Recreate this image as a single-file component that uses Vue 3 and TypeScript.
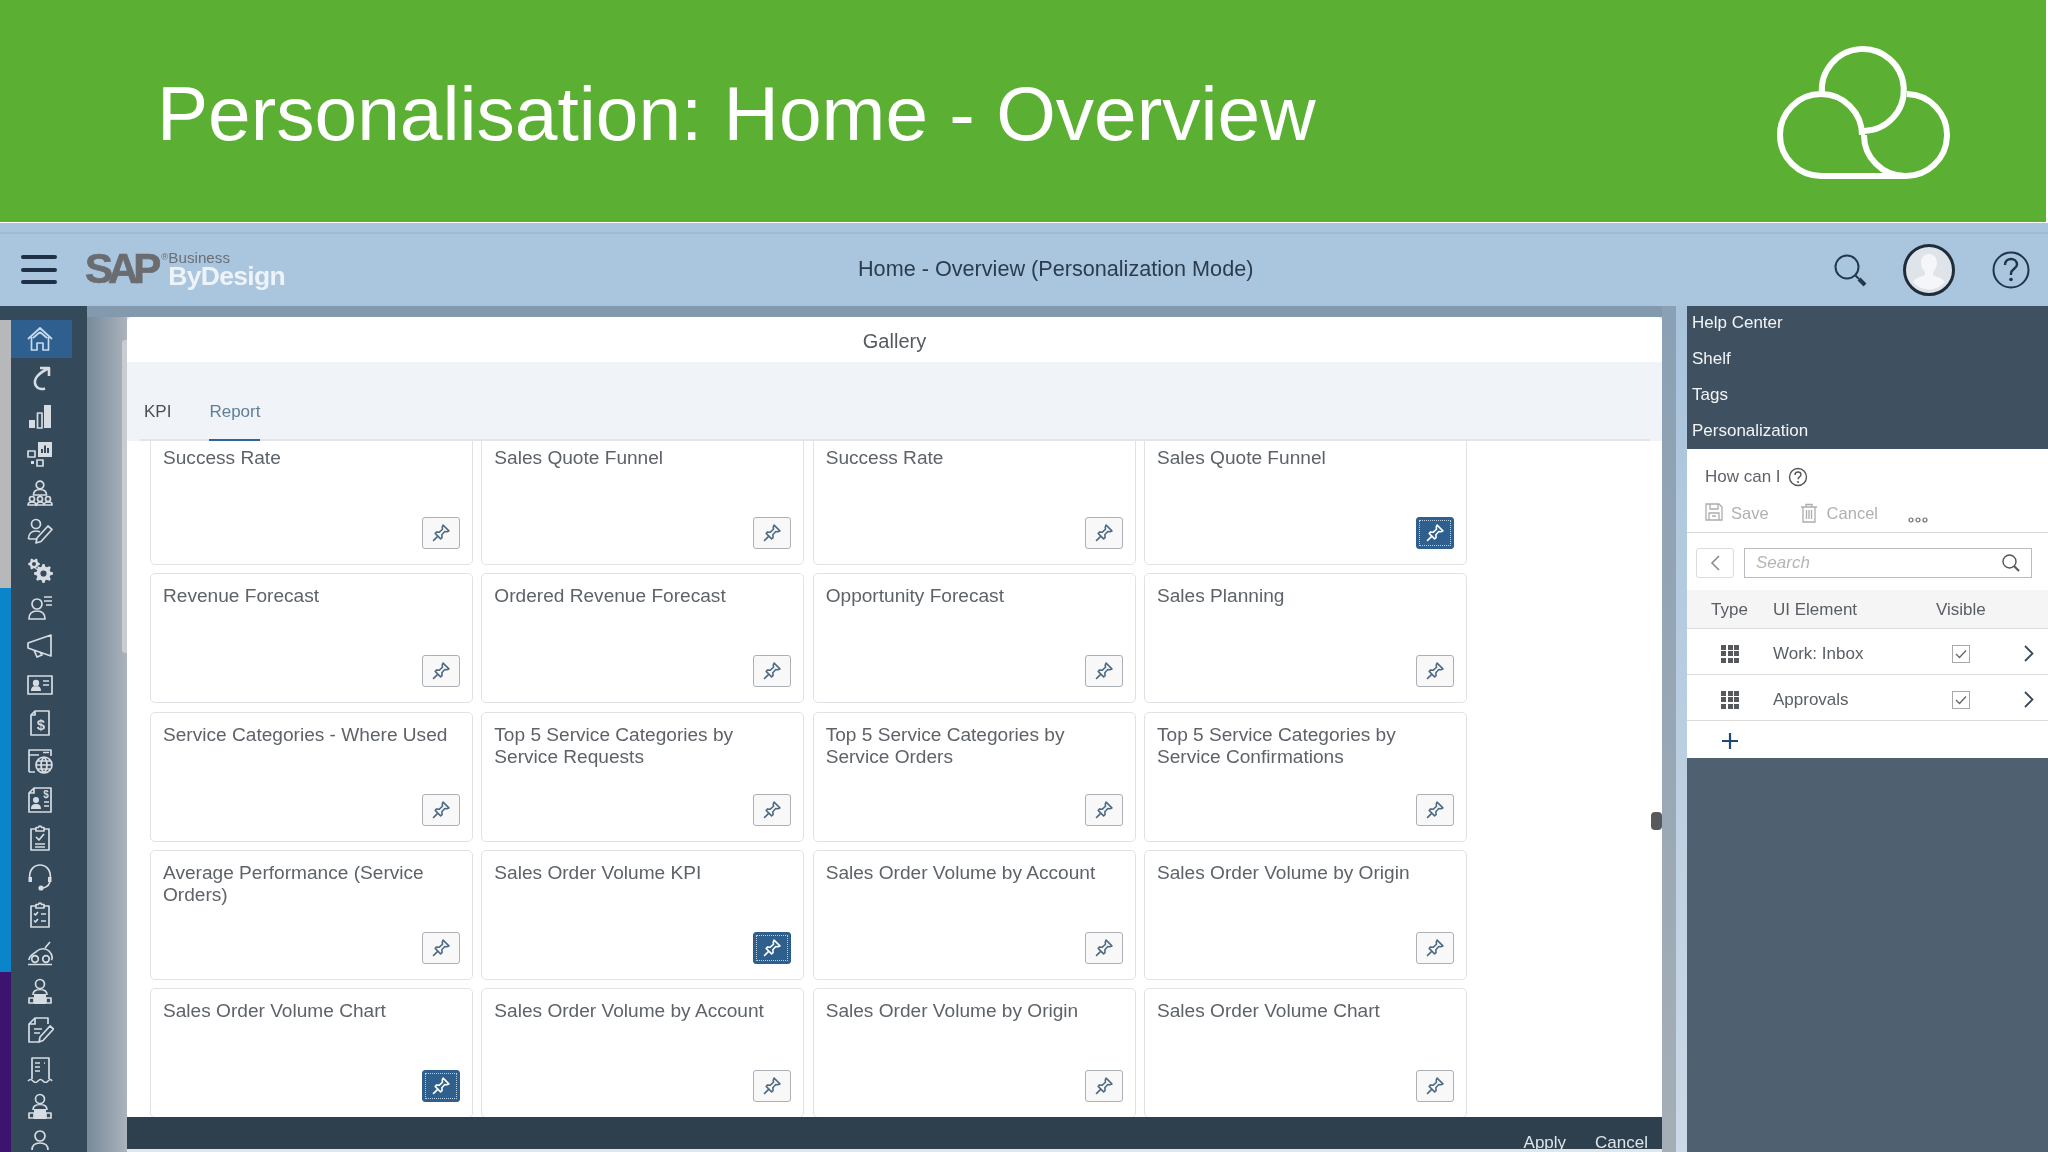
<script setup lang="ts">
interface Icon { d?: string; f?: string; k?: string; t?: string; tx?: number; ty?: number; ts?: number }

const c = (x: number, y: number, r: number) => `M${x - r} ${y}a${r} ${r} 0 1 0 ${2 * r} 0a${r} ${r} 0 1 0 ${-2 * r} 0z`
const r = (x: number, y: number, w: number, h: number) => `M${x} ${y}h${w}v${h}h${-w}z`
const gear = (cx: number, cy: number, a: number, b: number, n: number) => {
  let p = ''
  for (let i = 0; i < n * 4; i++) {
    const ang = ((i - 0.5) * Math.PI * 2) / (n * 4)
    const rad = i % 4 < 2 ? b : a + (b - a) * 0.45
    p += `${i ? 'L' : 'M'}${(cx + rad * Math.cos(ang)).toFixed(1)} ${(cy + rad * Math.sin(ang)).toFixed(1)}`
  }
  return p + 'z' + c(cx, cy, a * 0.62)
}

const icons: Icon[] = [
  { d: 'M2 14 14 3 26 14M5.500 10.500V25H11V18H17V25H22.500V10.500M14 7 7 13M14 7l7 6' },
  { d: 'M14 4H23V12M23 4C13 9 6 15 10 22 12 25 16 25.500 19 24.500' },
  { f: r(3, 18, 6, 8) + r(18, 3, 7, 23), d: r(11.500, 11, 4.500, 15) },
  { f: r(12, 2, 14, 15) + r(5, 21, 3, 3), k: 'M16 13V9M19 13V5.500M22 13V8', d: r(2, 11, 7, 6) + r(11, 20, 6, 6) },
  { d: c(14, 6, 3.800) + 'M7.500 16c0-4 3-5.500 6.500-5.500s6.500 1.500 6.500 5.500z' + c(6, 20, 2.500) + c(14, 20, 2.500) + c(22, 20, 2.500) + 'M2 26c0-2 2-3 4-3s4 1 4 3 0-3 4-3 4 3 4 3 0-3 4-3 4 1 4 3z' },
  { d: c(10, 7, 4.500) + 'M2.500 22c0-5 3-8 7.500-8 2 0 3 .5 4 1M2.500 22H11M10 26 11 21 22 9 26 12.500 15 24.500z' },
  { f: gear(8, 8, 3.200, 5.800, 6) + gear(17.500, 17.500, 5, 9.500, 8) },
  { d: c(11, 10, 5) + 'M3 25c0-5.500 3-8 8-8s8 2.500 8 8zM18 3h8M18 7h8M20 11h6' },
  { d: 'M2 11 25 3V24L9 18.500 2 16zM8 18l3 7 5-2-2-3M25 3v21' },
  { d: r(2, 5, 24, 18) + 'M17 10h6M17 14h6', f: c(10, 12, 3.200) + 'M5 20c0-4 2-5 5-5s5 1 5 5z' },
  { d: 'M9 2H23V26H5V6zM9 2V6H5', t: '$', tx: 15, ty: 21, ts: 15 },
  { d: 'M3 25V3H25V9M3 8H13M17 5.500h6M3 25H9' + c(18, 18, 8) + 'M10 18h16M18 10c-4 4-4 12 0 16M18 10c4 4 4 12 0 16M11 14h14M11 22h14' },
  { d: 'M8 2H25V26H3V7zM8 2V7H3M18 16h5M18 20h5', f: c(10, 14, 3) + 'M5 23c0-4 2-5 5-5s5 1 5 5z', t: '$', tx: 20, ty: 12, ts: 10 },
  { d: 'M10 5H5V26H23V5H18M10 7V3.500h2.500a1.500 1.500 0 0 1 3 0H18V7zM10 13l3 3 5-6M9 20h10M9 23h10' },
  { d: 'M4 17C2 6 9 2 14 2s12 4 10 15M24 17c0 4-3 7-7 8', f: c(15, 25, 2.600) + r(2.500, 14, 3.500, 5) + r(22, 14, 3.500, 5) },
  { d: 'M10 5H5V26H23V5H18M10 7V3.500h2.500a1.500 1.500 0 0 1 3 0H18V7zM8 12.500l1.500 1.500 2.500-3M15 13h5M8 19.500l1.500 1.500 2.500-3M15 20h5' },
  { d: 'M2 25.500H26M3 21C3 16 8 15 11 12 14 9 20 9 23 12 26 15 27 18 25.500 21M19 9l5-6' + c(9, 20, 3.300) + c(20, 20, 3.300) },
  { d: c(14, 6, 4.500) + 'M7 17c0-4 3-5.500 7-5.500s7 1.500 7 5.500M3 20H8V25H3zM20 20H25V25H20z', f: r(8, 16, 12, 10) },
  { d: 'M22 8V2H9L3 8V26H14M9 2V8H3M8 13h8M8 17h6M13 26 14 21 24 10 27.500 13 17 24.500z' },
  { d: 'M6 24V3H23V24M2 26c2-2 3-2 5 0s3 2 5 0 3-2 5 0 3 2 5 0 3-2 4 0M9 8h5M9 12h5M9 16h5M18 8h1' },
  { d: c(14, 6, 4.500) + 'M7 17c0-4 3-5.500 7-5.500s7 1.500 7 5.500M3 20H8V25H3zM20 20H25V25H20z', f: r(8, 16, 12, 10) },
  { d: c(14, 8, 5) + 'M6 22c0-5 3-7 8-7s8 2 8 7M5 26H23' },
]

interface Card { title: string; on?: boolean }
const cards: Card[] = [
  { title: 'Success Rate' }, { title: 'Sales Quote Funnel' }, { title: 'Success Rate' }, { title: 'Sales Quote Funnel', on: true },
  { title: 'Revenue Forecast' }, { title: 'Ordered Revenue Forecast' }, { title: 'Opportunity Forecast' }, { title: 'Sales Planning' },
  { title: 'Service Categories - Where Used' }, { title: 'Top 5 Service Categories by Service Requests' }, { title: 'Top 5 Service Categories by Service Orders' }, { title: 'Top 5 Service Categories by Service Confirmations' },
  { title: 'Average Performance (Service Orders)' }, { title: 'Sales Order Volume KPI', on: true }, { title: 'Sales Order Volume by Account' }, { title: 'Sales Order Volume by Origin' },
  { title: 'Sales Order Volume Chart', on: true }, { title: 'Sales Order Volume by Account' }, { title: 'Sales Order Volume by Origin' }, { title: 'Sales Order Volume Chart' },
]
const links = ['Help Center', 'Shelf', 'Tags', 'Personalization']
const rows = ['Work: Inbox', 'Approvals']
const gridCells = [0, 1, 2, 3, 4, 5, 6, 7, 8]
</script>

<template>
  <div class="app">
    <section class="banner">
      <h1 class="banner-title">Personalisation: Home - Overview</h1>
      <svg class="cloud" width="180" height="150" viewBox="0 0 180 150" fill="none" stroke="#fff" stroke-width="6">
        <path d="M51 136A41 41 0 1 1 92 95" />
        <path d="M94 95A41 41 0 0 0 135 136A41 41 0 0 0 137 54" />
        <path d="M52 54A41 41 0 1 1 94 91" />
        <path d="M51 136H135" />
      </svg>
    </section>

    <header class="topbar">
      <div class="burger"><i></i><i></i><i></i></div>
      <div class="logo">
        <span class="logo-sap">SAP</span>
        <span class="logo-reg">®</span>
        <span class="logo-words">
          <span class="logo-biz">Business</span>
          <span class="logo-bd">ByDesign</span>
        </span>
      </div>
      <div class="top-title">Home - Overview (Personalization Mode)</div>
      <svg class="top-search" width="36" height="36" viewBox="0 0 36 36" fill="none" stroke="#22384d">
        <circle cx="14" cy="14" r="11.500" stroke-width="2" />
        <path d="M22.500 22.500 26 26" stroke-width="2" />
        <path d="M26 26 32 32" stroke-width="4" />
      </svg>
      <svg class="top-avatar" width="54" height="54" viewBox="0 0 54 54">
        <circle cx="27" cy="27" r="24.500" fill="#dfe3ea" stroke="#1f2d3a" stroke-width="3" />
        <path d="M27 11c5 0 8 4 8 9 0 4-2 7-4 9v3c4 2 10 3 12 7a21 21 0 0 1-32 0c2-4 8-5 12-7v-3c-2-2-4-5-4-9 0-5 3-9 8-9z" fill="#f4f6f9" />
      </svg>
      <svg class="top-help" width="38" height="38" viewBox="0 0 38 38" fill="none" stroke="#1f3349" stroke-width="2">
        <circle cx="19" cy="19" r="17.500" />
        <path d="M13 14c0-4 3-6 6-6s6 2 6 5.500c0 4-6 4.500-6 9v1.500" stroke-width="2.400" />
        <circle cx="19" cy="28.500" r="1.800" fill="#1f3349" stroke="none" />
      </svg>
    </header>

    <div class="main">
      <aside class="sidebar">
        <div class="strip">
          <div class="strip-gray"></div>
          <div class="strip-blue"></div>
          <div class="strip-purple"></div>
        </div>
        <nav class="nav">
          <div v-for="(ic, i) in icons" :key="i" class="nav-item" :class="{ active: i === 0 }">
            <svg width="28" height="28" viewBox="0 0 28 28" fill="none" :stroke="i === 0 ? '#c6dbee' : '#d6dce1'" :stroke-width="i === 1 ? 2.600 : 1.700" stroke-linejoin="round">
              <path v-if="ic.f" :d="ic.f" fill="#d6dce1" fill-rule="evenodd" stroke="none" />
              <path v-if="ic.d" :d="ic.d" />
              <path v-if="ic.k" :d="ic.k" stroke="#34495a" stroke-width="2" />
              <text v-if="ic.t" :x="ic.tx" :y="ic.ty" :font-size="ic.ts" text-anchor="middle" font-weight="700" font-family="Liberation Sans, sans-serif" fill="#d6dce1" stroke="none">{{ ic.t }}</text>
            </svg>
          </div>
        </nav>
      </aside>

      <div class="stage">
        <div class="behind"></div>
        <div class="dialog">
          <div class="dialog-head">Gallery</div>
          <div class="tabs">
            <span class="tab">KPI</span>
            <span class="tab tab-on">Report</span>
          </div>
          <div class="scroller">
            <div class="cards">
              <div v-for="(card, i) in cards" :key="i" class="card">
                <div class="card-title">{{ card.title }}</div>
                <button class="pin" :class="{ 'pin-on': card.on }">
                  <svg width="20" height="20" viewBox="0 0 24 24" fill="none" :stroke="card.on ? '#fff' : '#4d6a85'" stroke-width="1.900" stroke-linejoin="round">
                    <path d="M14.500 2.500 21.500 9.500 19 10.500 16.500 10.200 13 14 13.300 17.500 11.500 19 5 12.500 6.500 10.700 10 11 13.800 7.500 13.500 5z" />
                    <path d="M8 16 2.500 21.500" />
                  </svg>
                </button>
              </div>
            </div>
            <div class="thumb"></div>
          </div>
          <div class="dialog-foot">
            <span>Apply</span>
            <span>Cancel</span>
          </div>
        </div>
      </div>

      <aside class="panel">
        <div class="panel-links">
          <div v-for="l in links" :key="l" class="panel-link">{{ l }}</div>
        </div>
        <div class="panel-body">
          <div class="how">
            <span>How can I</span>
            <svg width="20" height="20" viewBox="0 0 20 20" fill="none" stroke="#555" stroke-width="1.400">
              <circle cx="10" cy="10" r="8.500" />
              <path d="M7 8c0-2 1.500-3 3-3s3 1 3 2.700c0 2-3 2.300-3 4.500" />
              <circle cx="10" cy="15" r="1" fill="#555" stroke="none" />
            </svg>
          </div>
          <div class="toolbar">
            <svg width="18" height="18" viewBox="0 0 18 18" fill="none" stroke="#adadad" stroke-width="1.300">
              <path d="M1 1H14L17 4V17H1zM5 1V6H13V1M4 17V10H14V17M7 13h4" />
            </svg>
            <span class="tool-text save">Save</span>
            <svg width="18" height="20" viewBox="0 0 18 20" fill="none" stroke="#adadad" stroke-width="1.300">
              <path d="M1 4H17M6 4V1.500H12V4M3 4V19H15V4M6.500 7V16M9 7V16M11.500 7V16" />
            </svg>
            <span class="tool-text">Cancel</span>
            <svg class="dots" width="20" height="6" viewBox="0 0 20 6" fill="none" stroke="#6d6d6d" stroke-width="1.200">
              <circle cx="3" cy="3" r="2" /><circle cx="10" cy="3" r="2" /><circle cx="17" cy="3" r="2" />
            </svg>
          </div>
          <div class="searchrow">
            <div class="back">
              <svg width="12" height="18" viewBox="0 0 12 18" fill="none" stroke="#8b8b8b" stroke-width="1.600"><path d="M10 2 3 9l7 7" /></svg>
            </div>
            <div class="searchbox">
              <span>Search</span>
              <svg width="20" height="20" viewBox="0 0 20 20" fill="none" stroke="#555" stroke-width="1.400">
                <circle cx="8.500" cy="8.500" r="6.500" />
                <path d="M13 13 18 18" stroke-width="2" />
              </svg>
            </div>
          </div>
          <div class="thead">
            <span class="col-type">Type</span>
            <span class="col-name">UI Element</span>
            <span class="col-vis">Visible</span>
          </div>
          <div v-for="row in rows" :key="row" class="trow">
            <div class="gridicon"><i v-for="n in gridCells" :key="n"></i></div>
            <span class="row-name">{{ row }}</span>
            <span class="check">
              <svg width="14" height="12" viewBox="0 0 14 12" fill="none" stroke="#666" stroke-width="1.300"><path d="M2 6l3.500 3.500L12 2.500" /></svg>
            </span>
            <svg class="chev" width="10" height="17" viewBox="0 0 10 17" fill="none" stroke="#3a4a5a" stroke-width="1.800"><path d="M1 1l7.500 7.500L1 16" /></svg>
          </div>
          <div class="addrow">
            <svg width="18" height="18" viewBox="0 0 18 18" stroke="#1f4b73" stroke-width="2.200"><path d="M9 1V17M1 9H17" /></svg>
          </div>
        </div>
        <div class="panel-rest"></div>
      </aside>
    </div>
  </div>
</template>

<style scoped>
.app {
  width: 2048px;
  height: 1152px;
  overflow: hidden;
  background: #fff;
  font-family: "Liberation Sans", Arial, sans-serif;
  filter: blur(0.35px);
}
.banner {
  width: 2046px;
  height: 222px;
  background: #5bb033;
  display: flex;
  align-items: center;
  justify-content: space-between;
  padding: 0 96px 0 157px;
  box-sizing: border-box;
  margin-bottom: 1px;
}
.banner-title {
  margin: 0;
  color: #fff;
  font-weight: 400;
  font-size: 76.650px;
  line-height: 1;
  position: relative;
  top: 3px;
}
.cloud { margin-top: 8px; }

.topbar {
  height: 83px;
  box-sizing: border-box;
  display: flex;
  align-items: center;
  background: linear-gradient(#a9c5de 9px, #a3b9cf 9px, #a3b9cf 11px, #aac6df 11px);
  padding-top: 10px;
  position: relative;
}
.burger {
  width: 36px;
  margin-left: 21px;
  display: flex;
  flex-direction: column;
  gap: 8.500px;
}
.burger i {
  display: block;
  height: 4px;
  border-radius: 2px;
  background: #1d3046;
}
.logo {
  display: flex;
  align-items: flex-start;
  margin-left: 28px;
  height: 44px;
}
.logo-sap {
  font-weight: 700;
  font-size: 42px;
  line-height: 40px;
  letter-spacing: -5px;
  color: #6a6c70;
  margin-top: 1px;
  -webkit-text-stroke: 0.7px #6a6c70;
}
.logo-reg { font-size: 9.500px; line-height: 12px; color: #6a6c70; margin: 3px 0 0 5px; }
.logo-words { display: flex; flex-direction: column; margin: 2px 0 0 0; }
.logo-biz { font-size: 15.200px; line-height: 15px; color: #6a6f76; }
.logo-bd { font-size: 26.500px; line-height: 22px; font-weight: 700; color: #edf3f9; letter-spacing: -0.700px; }
.top-title {
  position: absolute;
  left: 858px;
  top: 33px;
  font-size: 21.640px;
  line-height: 26px;
  color: #2b3c4e;
  white-space: nowrap;
}
.top-search { margin-left: auto; margin-right: 33px; margin-top: 2px; }
.top-avatar { margin-right: 36px; }
.top-help { margin-right: 18px; }

.main { display: flex; height: 846px; }

.sidebar {
  width: 87px;
  flex: none;
  display: flex;
  background: #34495a;
  overflow: hidden;
}
.strip { width: 11px; padding-top: 14px; box-sizing: border-box; display: flex; flex-direction: column; }
.strip-gray { height: 268px; background: #b7b8b9; }
.strip-blue { height: 384px; background: #0a85c9; }
.strip-purple { flex: 1; background: #3c1470; }
.nav { padding-top: 14px; }
.nav-item {
  width: 61px;
  height: 38.400px;
  display: flex;
  align-items: center;
  justify-content: center;
  padding-right: 3px;
  box-sizing: border-box;
}
.nav-item:last-child { margin-top: -3px; }
.nav-item.active { background: #2f5f8e; }

.stage {
  flex: 1;
  min-width: 0;
  padding: 11px 25px 3px 40px;
  box-sizing: border-box;
  position: relative;
  background:
    linear-gradient(#a9c3db, #ccd9e6) right top / 11px 100% no-repeat,
    linear-gradient(#8aa0b4, #a5aeb6) right 11px top / 14px 100% no-repeat,
    linear-gradient(#8299ae 11px, transparent 11px) left top / 100% 100% no-repeat,
    linear-gradient(90deg, #78899a, #abb3bc) left top / 40px 100% no-repeat,
    #dfe6ec;
}
.behind {
  position: absolute;
  left: 35px;
  top: 34px;
  width: 5px;
  height: 313px;
  background: #c9ccd0;
  border-radius: 3px 0 0 3px;
}
.dialog {
  position: relative;
  height: 100%;
  display: flex;
  flex-direction: column;
  background: #fff;
  border-radius: 5px 5px 0 0;
  overflow: hidden;
}
.dialog-head {
  height: 45px;
  flex: none;
  display: flex;
  align-items: center;
  justify-content: center;
  padding-top: 3px;
  box-sizing: border-box;
  font-size: 20px;
  color: #555b61;
}
.tabs {
  height: 79px;
  flex: none;
  box-sizing: border-box;
  display: flex;
  align-items: flex-end;
  gap: 38px;
  padding-left: 17px;
  background:
    linear-gradient(#dfe5ea, #dfe5ea) 13px bottom / 1510px 2px no-repeat,
    #f0f4f8;
  position: relative;
  z-index: 1;
}
.tab {
  font-size: 17px;
  line-height: 22px;
  color: #4a4f55;
  padding-bottom: 16px;
  border-bottom: 2px solid transparent;
}
.tab-on { color: #5f7f98; border-bottom-color: #2f6497; }
.scroller { flex: 1; min-height: 0; overflow: hidden; position: relative; }
.cards {
  display: grid;
  grid-template-columns: repeat(4, 323px);
  grid-auto-rows: 130px;
  column-gap: 8.330px;
  row-gap: 8.250px;
  padding-left: 23px;
  margin-top: -6px;
}
.card {
  box-sizing: border-box;
  border: 1.500px solid #dfe2e6;
  border-radius: 5px;
  padding: 11px 12px 15px 12px;
  display: flex;
  flex-direction: column;
  justify-content: space-between;
  background: #fff;
}
.card-title {
  font-size: 19.100px;
  line-height: 22px;
  color: #5e6369;
}
.pin {
  align-self: flex-end;
  width: 38px;
  height: 32px;
  padding: 0;
  display: flex;
  align-items: center;
  justify-content: center;
  background: #f8f8f8;
  border: 1.500px solid #aab0b6;
  border-radius: 3px;
}
.pin-on {
  background: #2f5f8c;
  border-color: #2f5f8c;
  outline: 1px dotted #b9cfe3;
  outline-offset: -4px;
}
.thumb {
  position: absolute;
  right: 0;
  top: 371px;
  width: 11px;
  height: 18px;
  border-radius: 4px;
  background: #58595b;
}
.dialog-foot {
  height: 32px;
  flex: none;
  background: #2e3f4e;
  display: flex;
  justify-content: flex-end;
  gap: 29px;
  padding: 15px 14px 0 0;
  box-sizing: border-box;
  color: #dfe5ea;
  font-size: 17px;
  line-height: 22px;
  overflow: hidden;
}

.panel {
  width: 361px;
  flex: none;
  display: flex;
  flex-direction: column;
}
.panel-links {
  height: 143px;
  background: #3f5161;
  padding: 0 0 0 5px;
  box-sizing: border-box;
}
.panel-link {
  height: 36px;
  line-height: 33px;
  font-size: 17px;
  color: #f2f4f6;
}
.panel-body { height: 309px; background: #fff; flex: none; }
.panel-rest { flex: 1; background: #4f6070; }
.how {
  height: 52px;
  display: flex;
  align-items: center;
  gap: 7px;
  padding-left: 18px;
  padding-top: 4px;
  box-sizing: border-box;
  font-size: 17px;
  color: #5e6369;
}
.toolbar {
  height: 32px;
  display: flex;
  align-items: flex-start;
  padding-left: 18px;
  padding-top: 2px;
  box-sizing: border-box;
  border-bottom: 1.500px solid #d6d8da;
}
.tool-text { font-size: 16.500px; line-height: 20px; color: #b0b0b0; margin-left: 9px; }
.tool-text.save { margin-right: 31px; margin-left: 8px; }
.dots { margin: 14px 0 0 30px; }
.searchrow {
  height: 57px;
  display: flex;
  align-items: center;
  padding: 3px 16px 0 9px;
  gap: 10px;
  box-sizing: border-box;
}
.back {
  width: 38px;
  height: 30px;
  flex: none;
  box-sizing: border-box;
  border: 1.500px solid #dcdcdc;
  border-radius: 3px;
  display: flex;
  align-items: center;
  justify-content: center;
}
.searchbox {
  flex: 1;
  height: 30px;
  box-sizing: border-box;
  border: 1.500px solid #b9bdc1;
  display: flex;
  align-items: center;
  justify-content: space-between;
  padding: 0 10px 0 11px;
  font-size: 17px;
  font-style: italic;
  color: #b5b5b5;
}
.thead {
  height: 39px;
  padding-top: 2px;
  box-sizing: border-box;
  background: #f5f5f5;
  border-bottom: 1.500px solid #dcdcdc;
  display: flex;
  align-items: center;
  font-size: 17px;
  color: #595e64;
}
.col-type { margin-left: 24px; width: 62px; }
.col-name { width: 163px; }
.trow {
  height: 46px;
  padding-top: 4px;
  box-sizing: border-box;
  border-bottom: 1.500px solid #dcdcdc;
  display: flex;
  align-items: center;
  font-size: 17px;
  color: #5a5f65;
}
.gridicon {
  width: 18px;
  height: 18px;
  margin-left: 34px;
  margin-right: 34px;
  display: grid;
  grid-template-columns: repeat(3, 5px);
  grid-auto-rows: 5px;
  gap: 1.500px;
}
.gridicon i { background: #55595e; display: block; }
.row-name { width: 179px; }
.check {
  width: 18px;
  height: 18px;
  box-sizing: border-box;
  border: 1.500px solid #a8a8a8;
  display: flex;
  align-items: center;
  justify-content: center;
}
.chev { margin-left: 54px; }
.addrow { height: 36px; padding-top: 3px; box-sizing: border-box; display: flex; align-items: center; padding-left: 34px; }
</style>
